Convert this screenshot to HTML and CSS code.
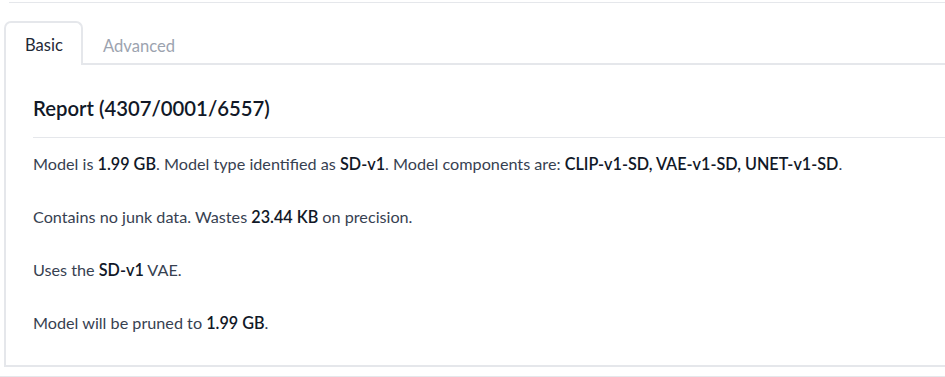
FILE: index.html
```html
<!DOCTYPE html>
<html>
<head>
<meta charset="utf-8">
<link rel="stylesheet" href="styles.css">
</head>
<body>
<div class="page">
  <div class="top-line"></div>
  <div class="tabs">
    <div class="tab-nav">
      <button class="tab active">Basic</button>
      <button class="tab">Advanced</button>
    </div>
    <div class="panel">
      <h2 class="title">Report (4307/0001/6557)</h2>
      <div class="rule"></div>
      <p>Model is <b>1.99 GB</b>. Model type identified as <b>SD-v1</b>. Model components are: <b>CLIP-v1-SD, VAE-v1-SD, UNET-v1-SD</b>.</p>
      <p>Contains no junk data. Wastes <b>23.44 KB</b> on precision.</p>
      <p>Uses the <b>SD-v1</b> VAE.</p>
      <p>Model will be pruned to <b>1.99 GB</b>.</p>
    </div>
  </div>
  <div class="next-line"></div>
</div>
</body>
</html>
```
FILE: styles.css
```css
html, body {
  margin: 0;
  padding: 0;
  background: #ffffff;
  overflow: hidden;
}
.page {
  width: 960px;
  font-family: "Source Sans Pro", Lato, "Noto Sans", sans-serif;
  color: #1f2937;
}
.top-line {
  margin: 2px 0 0 9px;
  border-top: 1px solid #e5e7eb;
}
.tabs {
  margin: 18px 0 0 4px;
}
.tab-nav {
  display: flex;
  align-items: flex-end;
  border-bottom: 2px solid #e5e7eb;
}
.tab {
  font-family: inherit;
  font-size: 16.6px;
  background: none;
  border: 2px solid transparent;
  border-bottom: none;
  padding: 1px 18px 0 18px;
  height: 42px;
  margin-bottom: -2px;
  color: #9ca3af;
  cursor: pointer;
}
.tab.active {
  color: #1f2937;
  background: #fff;
  border-color: #e5e7eb;
  border-radius: 7px 7px 0 0;
  height: 44px;
  padding: 1px 18px 0 19px;
}
.panel {
  border-left: 2px solid #e5e7eb;
  border-bottom: 2px solid #e5e7eb;
  padding: 28px 0 8px 27px;
  box-sizing: border-box;
  height: 302px;
}
.title {
  margin: 0;
  font-size: 20.3px;
  font-weight: 600;
  line-height: 30px;
  color: #111827;
}
.rule {
  margin-top: 14px;
  border-top: 1px solid #e5e7eb;
}
p {
  margin: 0;
  font-size: 16.2px;
  line-height: 53px;
  color: #374151;
}
p:first-of-type {
  margin-top: -1px;
}
b {
  font-weight: 600;
  color: #111827;
}
.next-line {
  margin-top: 9px;
  border-top: 1px solid #e5e7eb;
}
```
